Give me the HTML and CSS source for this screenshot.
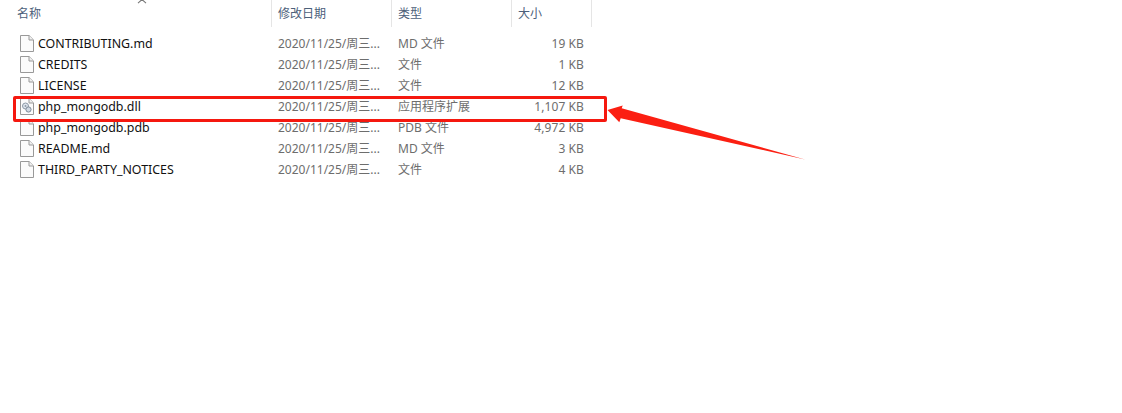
FILE: index.html
```html
<!DOCTYPE html>
<html lang="zh-CN">
<head>
<meta charset="utf-8">
<title>文件列表</title>
<link rel="stylesheet" href="styles.css">
</head>
<body>
<div class="explorer">
  <div class="head row-grid">
    <div class="hcell name-h">名称<svg class="sort" width="10" height="5" viewBox="0 0 10 5"><path d="M1 4.200 5 .5l4 3.700" fill="none" stroke="#777" stroke-width="1.100"/></svg></div>
    <div class="hcell">修改日期</div>
    <div class="hcell">类型</div>
    <div class="hcell">大小</div>
  </div>
  <div class="rows">
    <div class="row row-grid"><div class="name"><svg class="ico" width="14" height="17" viewBox="0 0 14 17"><use href="#file"/></svg>CONTRIBUTING.md</div><div class="date">2020/11/25/周三...</div><div class="type">MD 文件</div><div class="size">19 KB</div></div>
    <div class="row row-grid"><div class="name"><svg class="ico" width="14" height="17" viewBox="0 0 14 17"><use href="#file"/></svg>CREDITS</div><div class="date">2020/11/25/周三...</div><div class="type">文件</div><div class="size">1 KB</div></div>
    <div class="row row-grid"><div class="name"><svg class="ico" width="14" height="17" viewBox="0 0 14 17"><use href="#file"/></svg>LICENSE</div><div class="date">2020/11/25/周三...</div><div class="type">文件</div><div class="size">12 KB</div></div>
    <div class="row row-grid"><div class="name"><svg class="ico" width="14" height="17" viewBox="0 0 14 17"><use href="#file"/><circle cx="5.500" cy="8" r="3" fill="#dfe6ee" stroke="#8d99a6"/><circle cx="8.500" cy="11.500" r="2.600" fill="#cfd8e2" stroke="#7f8c9a"/><circle cx="5.500" cy="8" r="1" fill="#8d99a6"/></svg>php_mongodb.dll</div><div class="date">2020/11/25/周三...</div><div class="type">应用程序扩展</div><div class="size">1,107 KB</div></div>
    <div class="row row-grid"><div class="name"><svg class="ico" width="14" height="17" viewBox="0 0 14 17"><use href="#file"/></svg>php_mongodb.pdb</div><div class="date">2020/11/25/周三...</div><div class="type">PDB 文件</div><div class="size">4,972 KB</div></div>
    <div class="row row-grid"><div class="name"><svg class="ico" width="14" height="17" viewBox="0 0 14 17"><use href="#file"/></svg>README.md</div><div class="date">2020/11/25/周三...</div><div class="type">MD 文件</div><div class="size">3 KB</div></div>
    <div class="row row-grid"><div class="name"><svg class="ico" width="14" height="17" viewBox="0 0 14 17"><use href="#file"/></svg>THIRD_PARTY_NOTICES</div><div class="date">2020/11/25/周三...</div><div class="type">文件</div><div class="size">4 KB</div></div>
  </div>
</div>
<div class="highlight"></div>
<svg class="arrow" width="200" height="70" viewBox="605 100 200 70"><path d="M607.500 110 622.700 105.500 621.700 108.300 805 159.400 620.700 118.300 619.300 122.300Z" fill="#fb1f12"/></svg>
<svg class="defs" width="0" height="0"><defs><g id="file"><path d="M.5.5h8.600l4.400 4.400V16.500H.5Z" fill="#fbfbfb" stroke="#999"/><path d="M9 .5V5h4.500" fill="#f0f0f0" stroke="#999"/></g></defs></svg>
</body>
</html>
```
FILE: styles.css
```css
html, body {
  margin: 0;
  padding: 0;
  background: #fff;
  overflow: hidden;
}
body {
  width: 1122px;
  height: 413px;
  position: relative;
  font-family: "Noto Sans", "Noto Sans CJK SC", sans-serif;
  font-size: 12px;
}
.explorer {
  width: 592px;
}
.row-grid {
  display: grid;
  grid-template-columns: 272px 120px 120px 80px;
}
.head {
  height: 27px;
}
.hcell {
  border-right: 1px solid #e5e5e5;
  color: #4c607a;
  padding: 5px 0 0 6px;
  line-height: 17px;
}
.name-h {
  padding-left: 17px;
  position: relative;
}
.sort {
  position: absolute;
  left: 137px;
  top: -1px;
}
.rows {
  padding-top: 6px;
}
.row {
  height: 21px;
  line-height: 21px;
  color: #6d6d6d;
}
.name {
  color: #111;
  font-size: 12.400px;
  padding-left: 20px;
  display: flex;
  align-items: center;
}
.ico {
  margin-right: 4px;
  flex: none;
}
.date {
  padding-left: 6px;
}
.type {
  padding-left: 6px;
}
.size {
  text-align: right;
  padding-right: 8px;
  letter-spacing: .1px;
}
.highlight {
  position: absolute;
  left: 13px;
  top: 96px;
  width: 588px;
  height: 20px;
  border: 3px solid #f5180f;
  border-radius: 2px;
}
.arrow {
  position: absolute;
  left: 605px;
  top: 100px;
}
.defs {
  position: absolute;
}
```
